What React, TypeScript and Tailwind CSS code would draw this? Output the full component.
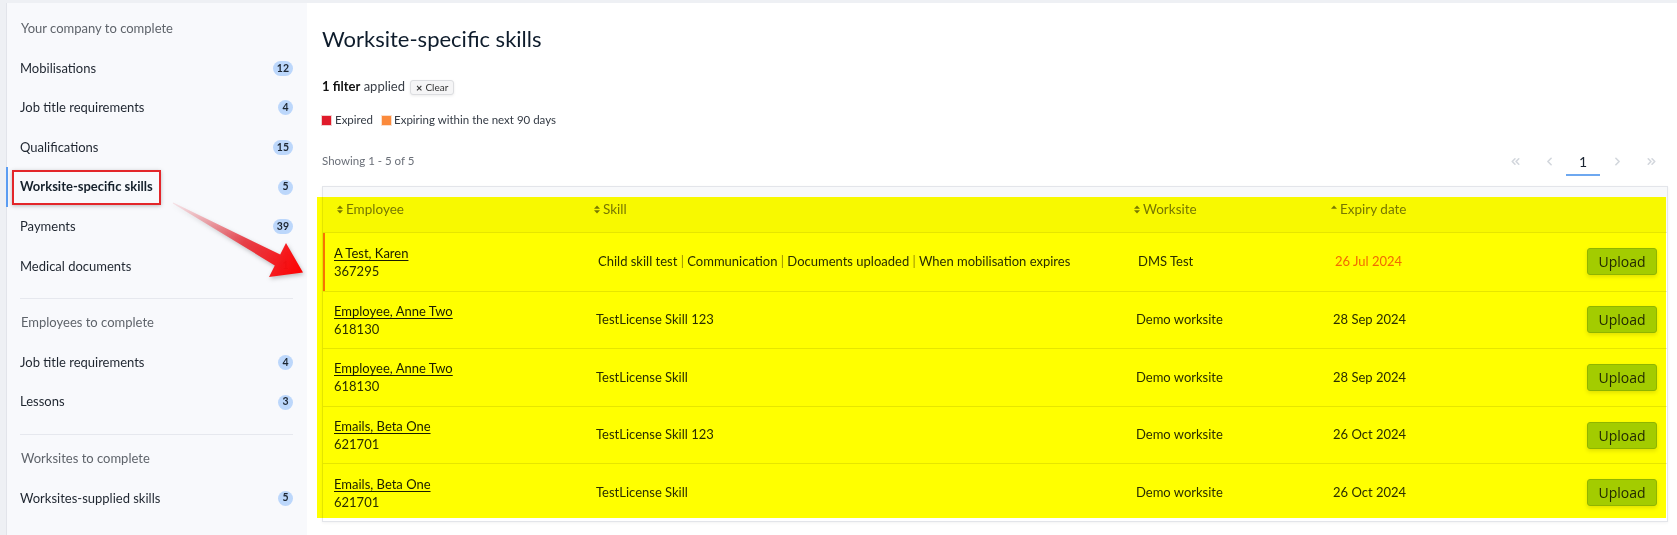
import { ChevronLeft, ChevronRight, ChevronsLeft, ChevronsRight } from 'lucide-react'

type NavItem = { label: string; count: number; active?: boolean }

const sections: { title: string; items: NavItem[] }[] = [
  {
    title: 'Your company to complete',
    items: [
      { label: 'Mobilisations', count: 12 },
      { label: 'Job title requirements', count: 4 },
      { label: 'Qualifications', count: 15 },
      { label: 'Worksite-specific skills', count: 5, active: true },
      { label: 'Payments', count: 39 },
      { label: 'Medical documents', count: 1 },
    ],
  },
  {
    title: 'Employees to complete',
    items: [
      { label: 'Job title requirements', count: 4 },
      { label: 'Lessons', count: 3 },
    ],
  },
  {
    title: 'Worksites to complete',
    items: [{ label: 'Worksites-supplied skills', count: 5 }],
  },
]

const rows = [
  {
    name: 'A Test, Karen',
    id: '367295',
    skill: ['Child skill test', 'Communication', 'Documents uploaded', 'When mobilisation expires'],
    site: 'DMS Test',
    date: '26 Jul 2024',
    expiring: true,
  },
  { name: 'Employee, Anne Two', id: '618130', skill: ['TestLicense Skill 123'], site: 'Demo worksite', date: '28 Sep 2024' },
  { name: 'Employee, Anne Two', id: '618130', skill: ['TestLicense Skill'], site: 'Demo worksite', date: '28 Sep 2024' },
  { name: 'Emails, Beta One', id: '621701', skill: ['TestLicense Skill 123'], site: 'Demo worksite', date: '26 Oct 2024' },
  { name: 'Emails, Beta One', id: '621701', skill: ['TestLicense Skill'], site: 'Demo worksite', date: '26 Oct 2024' },
]

const cols = 'grid grid-cols-[262px_540px_197px_177px_1fr]'

function SortIcon({ up }: { up?: boolean }) {
  return (
    <svg width="6" height="9" viewBox="0 0 6 9" className="fill-current shrink-0">
      <path d="M3 0.5 L6 3.8 H0 Z" />
      {!up && <path d="M3 8.5 L0 5.2 H6 Z" />}
    </svg>
  )
}

function Badge({ n }: { n: number }) {
  return (
    <span className="flex h-[15px] min-w-[15px] items-center justify-center rounded-full bg-[#bcd7fb] px-[4px] text-[10.5px] font-bold text-[#1d2733]">
      {n}
    </span>
  )
}

function Arrow() {
  return (
    <svg
      className="pointer-events-none absolute left-0 top-0 drop-shadow-[1px_2px_2px_rgba(0,0,0,0.25)]"
      width="320"
      height="290"
      viewBox="0 0 320 290"
    >
      <defs>
        <linearGradient id="arr" x1="173" y1="203" x2="303" y2="272" gradientUnits="userSpaceOnUse">
          <stop offset="0" stopColor="#f0a0a8" stopOpacity="0.25" />
          <stop offset="0.55" stopColor="#e8303a" stopOpacity="0.9" />
          <stop offset="1" stopColor="#ff0000" />
        </linearGradient>
      </defs>
      <polygon
        points="173.2,202.6 280.2,254.6 286,243 303,272.5 269,277 274.8,265.4 172.8,203.4"
        fill="url(#arr)"
      />
    </svg>
  )
}

export default function App() {
  return (
    <div className="relative flex h-screen overflow-hidden bg-[#eef0f4] pt-[3px] font-['Lato',sans-serif] text-[13px] text-[#1f2630]">
      {/* Sidebar */}
      <aside className="ml-[6px] w-[301px] shrink-0 border-l border-[#e2e4ea] bg-[#f8f9fc] pl-[13px] pr-[14px] pt-[6px]">
        {sections.map((s, i) => (
          <div key={s.title} className={i > 0 ? 'mt-[12px] border-t border-[#e6e8ee] pt-[4px]' : ''}>
            <div className="flex h-[39.6px] items-center pl-px text-[#5f646b]">{s.title}</div>
            {s.items.map((it) => (
              <div key={it.label} className="relative flex h-[39.6px] items-center justify-between">
                {it.active && <span className="absolute -left-[14px] top-0 h-full w-[2px] bg-[#5c9df2]" />}
                <span className={it.active ? 'relative font-bold text-[#15202b]' : ''}>
                  {it.label}
                  {it.active && (
                    <span className="absolute -bottom-[8px] -left-[8px] -right-[8px] -top-[7px] border-2 border-[#e3262a] shadow-[0_1px_4px_rgba(0,0,0,0.25)]" />
                  )}
                </span>
                <Badge n={it.count} />
              </div>
            ))}
          </div>
        ))}
      </aside>

      {/* Main */}
      <main className="flex-1 bg-white pl-[15px] pr-[9px]">
        <h1 className="mt-[21px] h-[30px] text-[22px] leading-[30px] text-[#0e1c2c]">Worksite-specific skills</h1>

        <div className="mt-[24px] flex h-[18px] items-center gap-[5px]">
          <span>
            <b className="font-bold text-[#111]">1 filter</b> <span className="text-[#3a3f47]">applied</span>
          </span>
          <button className="flex h-[15px] items-center gap-[3px] rounded-[3px] border border-[#dcdde0] bg-[#f5f5f6] px-[5px] text-[10px] leading-none text-[#333] shadow-[0_1px_3px_rgba(0,0,0,0.08)]">
            <span className="text-[11px] font-bold">×</span> Clear
          </button>
        </div>

        <div className="mt-[15px] flex h-[18px] items-center text-[11.5px] text-[#333a44]">
          <span className="mr-[4px] h-[9px] w-[9px] bg-[#e01b2b] outline outline-1 outline-[#f0d0d0]" />
          <span>Expired</span>
          <span className="ml-[9px] mr-[3px] h-[9px] w-[9px] bg-[#fb8a3c] outline outline-1 outline-[#fbe0cc]" />
          <span>Expiring within the next 90 days</span>
        </div>

        <div className="mt-[17px] flex h-[30px] items-center justify-between">
          <span className="text-[11.5px] text-[#6b7079]">Showing 1 - 5 of 5</span>
          <div className="flex h-full items-stretch text-[#d3d7dd]">
            <span className="flex w-[34px] items-center justify-center"><ChevronsLeft size={13} strokeWidth={3} /></span>
            <span className="flex w-[34px] items-center justify-center"><ChevronLeft size={13} strokeWidth={3} /></span>
            <span className="flex w-[34px] items-center justify-center border-b-2 border-[#6ea8f0] pt-[2px] text-[14px] text-[#1b2431]">1</span>
            <span className="flex w-[34px] items-center justify-center"><ChevronRight size={13} strokeWidth={3} /></span>
            <span className="flex w-[34px] items-center justify-center"><ChevronsRight size={13} strokeWidth={3} /></span>
          </div>
        </div>

        {/* Table */}
        <div className="relative mt-[10px] border border-[#e3e5ea] bg-white shadow-[0_1px_3px_rgba(0,0,0,0.05)]">
          <div className={`${cols} h-[46px] items-center border-b border-[#e6e6e6] bg-[#f8f9fb] text-[13.5px] text-[#777]`}>
            <div className="flex items-center gap-[3px] pl-[14px]"><SortIcon /> Employee</div>
            <div className="flex items-center gap-[3px] pl-[9px]"><SortIcon /> Skill</div>
            <div className="flex items-center gap-[3px] pl-[9px]"><SortIcon /> Worksite</div>
            <div className="flex items-center gap-[3px] pl-[9px]"><SortIcon up /> Expiry date</div>
            <div />
          </div>
          {rows.map((r, i) => (
            <div
              key={i}
              className={`${cols} h-[57.6px] items-center ${i > 0 ? 'border-t border-[#e6e6e6]' : ''} ${r.expiring ? 'border-l-2 border-l-[#f97316]' : ''}`}
            >
              <div className={r.expiring ? 'pl-[9px]' : 'pl-[11px]'}>
                <div className="leading-[18px] text-[#1a1d22] underline underline-offset-2">{r.name}</div>
                <div className="leading-[18px] text-[#2a2e35]">{r.id}</div>
              </div>
              <div className="pl-[11px] text-[#2a2e35]">
                {r.skill.map((s, j) => (
                  <span key={j}>
                    {j > 0 && <span className="text-[#9a8f8f]"> | </span>}
                    {s}
                  </span>
                ))}
              </div>
              <div className="pl-[11px] text-[#2a2e35]">{r.site}</div>
              <div className={`pl-[11px] ${r.expiring ? 'text-[#f26a2e]' : 'text-[#2a2e35]'}`}>{r.date}</div>
              <div className="flex justify-end pr-[10px]">
                <button className="h-[27px] w-[70px] rounded-[3px] border border-[#8fb52e] bg-[#a3cc4a] font-['Open_Sans',sans-serif] text-[14px] text-[#222a10] shadow-[0_2px_4px_rgba(0,0,0,0.12)]">
                  Upload
                </button>
              </div>
            </div>
          ))}
          {/* yellow highlight annotation */}
          <div className="pointer-events-none absolute -left-[6px] bottom-[3px] right-[1px] top-[10px] bg-[#ffff00] mix-blend-multiply" />
        </div>
      </main>

      <Arrow />
    </div>
  )
}
